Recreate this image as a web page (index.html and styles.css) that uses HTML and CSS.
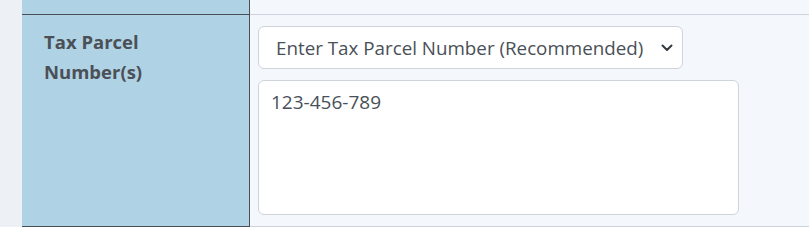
FILE: index.html
```html
<!DOCTYPE html>
<html>
<head>
<meta charset="utf-8">
<link rel="stylesheet" href="styles.css">
</head>
<body>
<div class="table">
  <div class="row row-prev">
    <div class="cell-label"></div>
    <div class="cell-field"></div>
  </div>
  <div class="row row-main">
    <div class="cell-label"><span class="label">Tax Parcel Number(s)</span></div>
    <div class="cell-field">
      <div class="select">
        <span class="select-text">Enter Tax Parcel Number (Recommended)</span>
        <svg class="chevron" width="12" height="8" viewBox="0 0 12 8"><path d="M1.5 1.5 L6 6 L10.5 1.5" fill="none" stroke="#343a40" stroke-width="2" stroke-linecap="round" stroke-linejoin="round"/></svg>
      </div>
      <div class="textarea">123-456-789</div>
    </div>
  </div>
</div>
</body>
</html>
```

FILE: styles.css
```css
html, body {
  margin: 0;
  padding: 0;
  background: #edf1f6;
  height: 227px;
  overflow: hidden;
}
.table {
  margin-left: 22px;
  font-family: "Open Sans", sans-serif;
  color: #495057;
}
.row {
  display: flex;
}
.cell-label {
  width: 228px;
  background: #b0d2e5;
  border-right: 1px solid #4a4f55;
  flex: none;
}
.cell-field {
  flex: 1;
  background: #f4f8fc;
}
.row-prev {
  height: 15px;
}
.row-prev .cell-label {
  box-sizing: border-box;
  border-bottom: 1px solid #4a4f55;
}
.row-prev .cell-field {
  box-sizing: border-box;
  border-bottom: 1px solid #ccd3dc;
}
.row-main .cell-label {
  border-bottom: 1px solid #4a4f55;
  padding: 12px 22px 0;
  box-sizing: border-box;
}
.row-main .cell-field {
  border-bottom: 1px solid #ccd3dc;
  padding: 11px 8px 11px;
  display: flex;
  flex-direction: column;
  gap: 11px;
}
.label {
  display: block;
  font-weight: 700;
  font-size: 18.5px;
  line-height: 30px;
  color: #4b5056;
  width: 140px;
}
.select {
  width: 425px;
  height: 43px;
  box-sizing: border-box;
  border: 1px solid #ced4da;
  border-radius: 6px;
  background: #fff;
  display: flex;
  align-items: center;
  padding: 0 9px 0 17px;
  justify-content: space-between;
}
.select-text {
  font-size: 18.8px;
  color: #495057;
}
.chevron {
  display: block;
}
.textarea {
  width: 481px;
  height: 135px;
  box-sizing: border-box;
  border: 1px solid #ced4da;
  border-radius: 6px;
  background: #fff;
  padding: 7px 12px;
  font-size: 19px;
  line-height: 28px;
  color: #495057;
}
```
